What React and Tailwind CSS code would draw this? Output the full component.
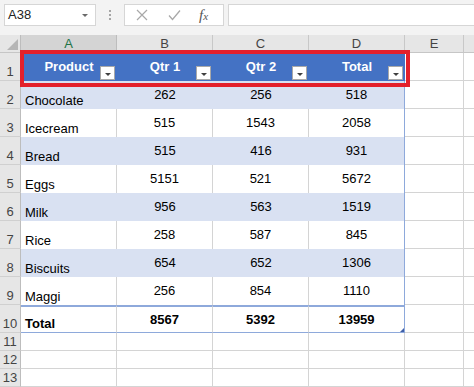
import React from "react";

const data = [
  ["Chocolate", 262, 256, 518],
  ["Icecream", 515, 1543, 2058],
  ["Bread", 515, 416, 931],
  ["Eggs", 5151, 521, 5672],
  ["Milk", 956, 563, 1519],
  ["Rice", 258, 587, 845],
  ["Biscuits", 654, 652, 1306],
  ["Maggi", 256, 854, 1110],
];

function RowHead({ n, h }) {
  return (
    <div
      className={`w-[21px] shrink-0 ${h} bg-[#E6E6E6] border-r border-b border-r-[#BDBDBD] border-b-[#D0D0D0] flex items-end justify-center pb-[1px] text-[13px] leading-[15px] text-[#444]`}
    >
      {n}
    </div>
  );
}

function DropBtn() {
  return (
    <div className="absolute right-[2px] bottom-[1px] w-[15px] h-[14px] bg-white border border-[#A9A9A9] flex items-end justify-center pb-[3px]">
      <div className="w-0 h-0 border-l-[3px] border-r-[3px] border-t-[3px] border-l-transparent border-r-transparent border-t-[#404040]" />
    </div>
  );
}

function EmptyCells({ h }) {
  return (
    <>
      <div className={`w-[59px] shrink-0 ${h} border-r border-b border-[#D4D4D4]`} />
      <div className={`flex-1 ${h} border-b border-[#D4D4D4]`} />
    </>
  );
}

export default function App() {
  return (
    <div className="relative w-[474px] h-[387px] overflow-hidden bg-white font-['Liberation_Sans',Arial,sans-serif] text-black">
      {/* Formula bar */}
      <div className="h-[35px] bg-[#F3F3F3] flex items-start pt-[4px]">
        <div className="ml-[4px] w-[92px] h-[22px] bg-white border border-[#D6D6D6] flex items-center justify-between pl-[3px] pr-[7px]">
          <span className="text-[13px] text-[#222]">A38</span>
          <div className="w-0 h-0 border-l-[3px] border-r-[3px] border-t-[3px] border-l-transparent border-r-transparent border-t-[#6A6A6A]" />
        </div>
        <div className="w-[28px] h-[22px] flex flex-col items-center justify-center gap-[2px]">
          <div className="w-[2px] h-[2px] bg-[#A5A5A5]" />
          <div className="w-[2px] h-[2px] bg-[#A5A5A5]" />
          <div className="w-[2px] h-[2px] bg-[#A5A5A5]" />
        </div>
        <div className="w-[100px] h-[22px] bg-white border border-[#D6D6D6] flex items-center">
          <svg width="12" height="12" viewBox="0 0 12 12" className="ml-[11px]">
            <path d="M1 1 L11 11 M11 1 L1 11" stroke="#A8A8A8" strokeWidth="1.2" fill="none" />
          </svg>
          <svg width="13" height="12" viewBox="0 0 13 12" className="ml-[20px]">
            <path d="M1 6.5 L4.5 10.5 L12 1.5" stroke="#A8A8A8" strokeWidth="1.3" fill="none" />
          </svg>
          <span className="ml-[18px] font-['Liberation_Serif',serif] italic text-[15px] text-[#555] leading-none">
            f<span className="text-[11px]">x</span>
          </span>
        </div>
        <div className="ml-[4px] flex-1 h-[22px] bg-white border border-[#D6D6D6] border-r-0" />
      </div>

      {/* Column headers */}
      <div className="flex h-[18px] bg-[#E6E6E6] border-b border-[#C6C6C6] text-[13px] text-[#444]">
        <div className="w-[21px] shrink-0 border-r border-[#BDBDBD] relative">
          <div className="absolute right-[2px] bottom-[2px] w-0 h-0 border-l-[11px] border-t-[11px] border-l-transparent border-t-transparent border-r-0 border-b-0"
            style={{}} />
          <div className="absolute right-[2px] bottom-[2px] w-0 h-0 border-b-[11px] border-l-[11px] border-b-[#B5B5B5] border-l-transparent" />
        </div>
        <div className="w-[96px] shrink-0 bg-[#D4D4D4] border-r border-[#BDBDBD] flex items-center justify-center text-[#217346]">A</div>
        <div className="w-[96px] shrink-0 border-r border-[#C8C8C8] flex items-center justify-center">B</div>
        <div className="w-[96px] shrink-0 border-r border-[#C8C8C8] flex items-center justify-center">C</div>
        <div className="w-[96px] shrink-0 border-r border-[#C8C8C8] flex items-center justify-center">D</div>
        <div className="w-[59px] shrink-0 border-r border-[#C8C8C8] flex items-center justify-center">E</div>
        <div className="flex-1" />
      </div>

      {/* Row 1: table header */}
      <div className="flex">
        <RowHead n={1} h="h-[28px]" />
        {["Product", "Qtr 1", "Qtr 2", "Total"].map((t) => (
          <div
            key={t}
            className="relative w-[96px] shrink-0 h-[28px] bg-[#4472C4] flex items-center justify-center text-white font-bold text-[13px]"
          >
            {t}
            <DropBtn />
          </div>
        ))}
        <EmptyCells h="h-[28px]" />
      </div>

      {/* Data rows */}
      {data.map((r, i) => {
        const band = i % 2 === 0;
        const bg = band ? "bg-[#D9E1F2]" : "bg-white";
        const inner = band ? "" : "border-r border-[#D4D4D4]";
        return (
          <div key={r[0]} className="flex">
            <RowHead n={i + 2} h="h-[28px]" />
            <div className={`w-[96px] shrink-0 h-[28px] ${bg} ${inner} flex items-end pl-[4px] pb-[1px] text-[13px] leading-[15px]`}>
              {r[0]}
            </div>
            <div className={`w-[96px] shrink-0 h-[28px] ${bg} ${inner} flex items-center justify-center text-[13px]`}>
              {r[1]}
            </div>
            <div className={`w-[96px] shrink-0 h-[28px] ${bg} ${inner} flex items-center justify-center text-[13px]`}>
              {r[2]}
            </div>
            <div className={`w-[96px] shrink-0 h-[28px] ${bg} border-r border-[#8EA9DB] flex items-center justify-center text-[13px]`}>
              {r[3]}
            </div>
            <EmptyCells h="h-[28px]" />
          </div>
        );
      })}

      {/* Total row */}
      <div className="flex">
        <RowHead n={10} h="h-[28px]" />
        <div className="w-[96px] shrink-0 h-[28px] border-t-2 border-b border-t-[#8EA9DB] border-b-[#8EA9DB] border-r border-r-[#D4D4D4] flex items-end pl-[4px] pb-[1px] text-[13px] leading-[15px] font-bold">
          Total
        </div>
        <div className="w-[96px] shrink-0 h-[28px] border-t-2 border-b border-t-[#8EA9DB] border-b-[#8EA9DB] border-r border-r-[#D4D4D4] flex items-center justify-center text-[13px] font-bold">
          8567
        </div>
        <div className="w-[96px] shrink-0 h-[28px] border-t-2 border-b border-t-[#8EA9DB] border-b-[#8EA9DB] border-r border-r-[#D4D4D4] flex items-center justify-center text-[13px] font-bold">
          5392
        </div>
        <div className="relative w-[96px] shrink-0 h-[28px] border-t-2 border-b border-t-[#8EA9DB] border-b-[#8EA9DB] border-r border-r-[#8EA9DB] flex items-center justify-center text-[13px] font-bold">
          13959
          <div className="absolute right-0 bottom-0 w-0 h-0 border-b-[4px] border-l-[4px] border-b-[#3F5FA8] border-l-transparent" />
        </div>
        <EmptyCells h="h-[28px]" />
      </div>

      {/* Empty rows */}
      {[11, 12, 13].map((n) => (
        <div key={n} className="flex">
          <RowHead n={n} h="h-[18px]" />
          <div className="w-[96px] shrink-0 h-[18px] border-r border-b border-[#D4D4D4]" />
          <div className="w-[96px] shrink-0 h-[18px] border-r border-b border-[#D4D4D4]" />
          <div className="w-[96px] shrink-0 h-[18px] border-r border-b border-[#D4D4D4]" />
          <div className="w-[96px] shrink-0 h-[18px] border-r border-b border-[#D4D4D4]" />
          <EmptyCells h="h-[18px]" />
        </div>
      ))}

      {/* Red annotation box */}
      <div className="absolute left-[20px] top-[50px] w-[390px] h-[37px] border-[4px] border-[#E3202B] pointer-events-none" />
    </div>
  );
}
